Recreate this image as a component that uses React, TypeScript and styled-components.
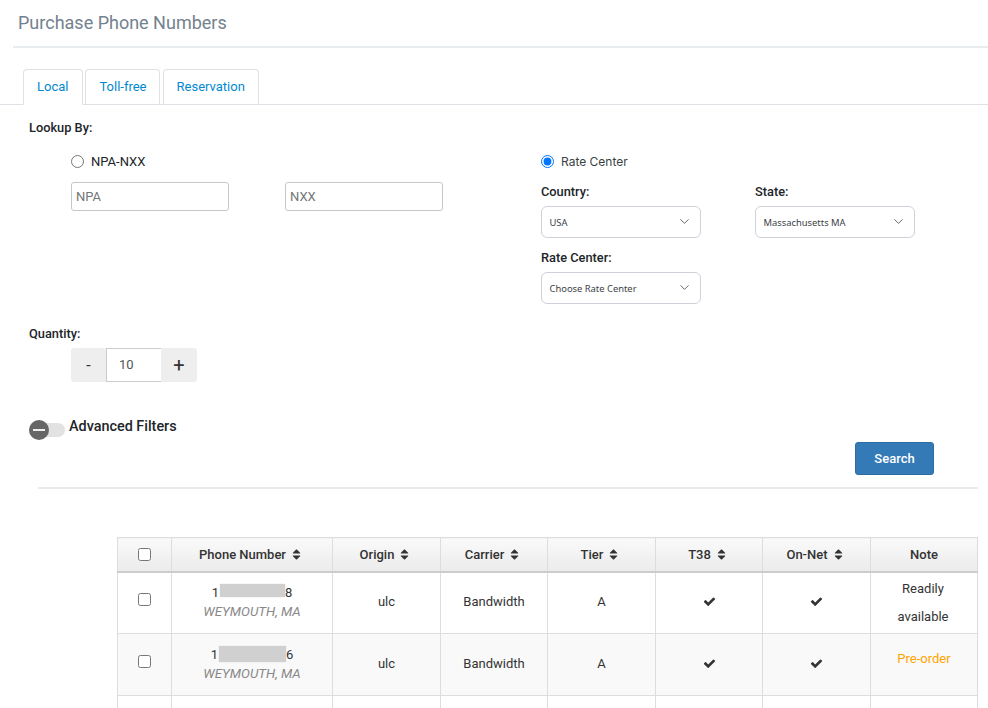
import { FC } from "react"
import styled, { createGlobalStyle } from "styled-components"
import { ChevronDown } from "lucide-react"

const GlobalStyle = createGlobalStyle`
  html, body {
    margin: 0;
    height: 708px;
    overflow: hidden;
    background: #fff;
    font-family: Roboto, "Liberation Sans", sans-serif;
    color: #333;
  }
  * {
    box-sizing: border-box;
  }
`

const tabs = ["Local", "Toll-free", "Reservation"]

const columns = [
  { label: "Phone Number", sortable: true, width: 161 },
  { label: "Origin", sortable: true, width: 108 },
  { label: "Carrier", sortable: true, width: 107 },
  { label: "Tier", sortable: true, width: 108 },
  { label: "T38", sortable: true, width: 107 },
  { label: "On-Net", sortable: true, width: 108 },
  { label: "Note", sortable: false, width: 107 },
]

const rows = [
  { first: "1", last: "8", blur: 65, preorder: false },
  { first: "1", last: "6", blur: 67, preorder: true },
]

const SortIcon = () => (
  <svg width="13" height="13" viewBox="0 0 1792 1792" fill="currentColor">
    <path d="M1408 1088q0 26-19 45l-448 448q-19 19-45 19t-45-19l-448-448q-19-19-19-45t19-45 45-19h896q26 0 45 19t19 45zm0-384q0 26-19 45t-45 19h-896q-26 0-45-19t-19-45 19-45l448-448q19-19 45-19t45 19l448 448q19 19 19 45z" />
  </svg>
)

const CheckIcon = () => (
  <svg width="13" height="13" viewBox="0 0 1792 1792" fill="currentColor">
    <path d="M1671 566q0 40-28 68l-724 724-136 136q-28 28-68 28t-68-28l-136-136-362-362q-28-28-28-68t28-68l136-136q28-28 68-28t68 28l294 295 656-657q28-28 68-28t68 28l136 136q28 28 28 68z" />
  </svg>
)

const SelectField: FC<{ label?: string; value: string }> = ({ label, value }) => (
  <Field>
    {label && <FieldLabel>{label}</FieldLabel>}
    <SelectBox>
      <span>{value}</span>
      <ChevronDown size={15} strokeWidth={1.4} color="#555" />
    </SelectBox>
  </Field>
)

export default function App() {
  return (
    <Page>
      <GlobalStyle />
      <Header>
        <Title>Purchase Phone Numbers</Title>
      </Header>

      <TabBar>
        {tabs.map((tab, i) => (
          <Tab key={tab} $active={i === 0}>
            {tab}
          </Tab>
        ))}
      </TabBar>

      <Form>
        <SectionLabel>Lookup By:</SectionLabel>
        <Lookup>
          <LookupColumn>
            <RadioRow>
              <input type="radio" name="lookup" />
              NPA-NXX
            </RadioRow>
            <InputRow>
              <TextInput placeholder="NPA" />
              <TextInput placeholder="NXX" />
            </InputRow>
          </LookupColumn>
          <LookupColumn>
            <RadioRow>
              <input type="radio" name="lookup" defaultChecked />
              <RateLabel>Rate Center</RateLabel>
            </RadioRow>
            <SelectGrid>
              <SelectField label="Country:" value="USA" />
              <SelectField label="State:" value="Massachusetts MA" />
              <SelectField label="Rate Center:" value="Choose Rate Center" />
            </SelectGrid>
          </LookupColumn>
        </Lookup>

        <QuantityLabel>Quantity:</QuantityLabel>
        <Stepper>
          <StepButton>-</StepButton>
          <StepValue>10</StepValue>
          <StepButton $large>+</StepButton>
        </Stepper>

        <FilterRow>
          <Toggle>
            <Knob />
          </Toggle>
          <FilterLabel>Advanced Filters</FilterLabel>
        </FilterRow>

        <Actions>
          <SearchButton>Search</SearchButton>
        </Actions>
      </Form>

      <Divider />

      <Table>
        <colgroup>
          <col style={{ width: 54 }} />
          {columns.map((c) => (
            <col key={c.label} style={{ width: c.width }} />
          ))}
        </colgroup>
        <thead>
          <tr>
            <HeadCell>
              <input type="checkbox" />
            </HeadCell>
            {columns.map((c) => (
              <HeadCell key={c.label}>
                <HeadInner>
                  {c.label}
                  {c.sortable && <SortIcon />}
                </HeadInner>
              </HeadCell>
            ))}
          </tr>
        </thead>
        <tbody>
          {rows.map((row, i) => (
            <Row key={i} $striped={i % 2 === 1}>
              <Cell>
                <RowCheck type="checkbox" />
              </Cell>
              <Cell>
                <PhoneLine>
                  {row.first}
                  <Redacted style={{ width: row.blur }} $tall={i === 1} />
                  {row.last}
                </PhoneLine>
                <Place>WEYMOUTH, MA</Place>
              </Cell>
              <Cell>ulc</Cell>
              <Cell>Bandwidth</Cell>
              <Cell>A</Cell>
              <Cell>
                <CheckIcon />
              </Cell>
              <Cell>
                <CheckIcon />
              </Cell>
              <Cell>
                {row.preorder ? (
                  <PreOrder>Pre-order</PreOrder>
                ) : (
                  <Note>Readily available</Note>
                )}
              </Cell>
            </Row>
          ))}
          <Row>
            {Array.from({ length: 8 }).map((_, i) => (
              <Cell key={i} />
            ))}
          </Row>
        </tbody>
      </Table>
    </Page>
  )
}

const Page = styled.div`
  width: 988px;
`

const Header = styled.header`
  height: 48px;
  margin-left: 13px;
  padding: 12px 0 0 5px;
  border-bottom: 2px solid #e9ecef;
`

const Title = styled.h1`
  margin: 0;
  font-size: 18px;
  line-height: 22px;
  font-weight: 400;
  color: #74818f;
`

const TabBar = styled.nav`
  display: flex;
  gap: 2px;
  height: 36px;
  margin-top: 21px;
  padding-left: 23px;
  border-bottom: 1px solid #dee2e6;
`

const Tab = styled.a<{ $active?: boolean }>`
  height: ${(p) => (p.$active ? "36px" : "35px")};
  padding: 0 ${(p) => (p.$active ? "14px" : "13px")} 0 13px;
  margin-right: ${(p) => (p.$active ? "0" : "1px")};
  border: 1px solid #dee2e6;
  border-bottom: ${(p) => (p.$active ? "1px solid #fff" : "none")};
  border-radius: 4px 4px 0 0;
  background: #fff;
  color: #0288d1;
  font-size: 13px;
  line-height: 34px;

  &:nth-child(2) {
    padding-right: 12px;
  }
`

const Form = styled.div`
  padding-left: 29px;
`

const SectionLabel = styled.div`
  margin-top: 15px;
  font-size: 12.8px;
  line-height: 16px;
  font-weight: 500;
  color: #212529;
`

const Lookup = styled.div`
  display: grid;
  grid-template-columns: 470px 1fr;
  margin-top: 15px;
  padding-left: 42px;
`

const LookupColumn = styled.div`
  display: flex;
  flex-direction: column;
`

const RadioRow = styled.label`
  display: flex;
  align-items: center;
  gap: 7px;
  height: 20px;
  font-size: 13px;
  color: #212529;

  input {
    width: 13px;
    height: 13px;
    margin: 0;
  }
`

const RateLabel = styled.span`
  font-family: Inter, Roboto, sans-serif;
  font-size: 12px;
  color: #3a3f44;
`

const InputRow = styled.div`
  display: flex;
  gap: 56px;
  margin-top: 11px;
`

const TextInput = styled.input`
  width: 158px;
  height: 29px;
  padding: 0 4px;
  border: 1px solid #c4c8cc;
  border-radius: 3px;
  font-family: Roboto, sans-serif;
  font-size: 13px;
  &::placeholder {
    color: #757575;
    opacity: 1;
  }
`

const SelectGrid = styled.div`
  display: grid;
  grid-template-columns: 214px 160px;
  row-gap: 12px;
  margin-top: 13px;
`

const Field = styled.div`
  display: flex;
  flex-direction: column;
  gap: 6px;
`

const FieldLabel = styled.div`
  font-size: 12.8px;
  line-height: 16px;
  font-weight: 500;
  color: #212529;
`

const SelectBox = styled.div`
  display: flex;
  align-items: center;
  justify-content: space-between;
  width: 160px;
  height: 32px;
  padding: 0 8px 0 7.5px;
  border: 1px solid #ced1d8;
  border-radius: 6px;
  font-family: "Noto Sans", sans-serif;
  font-size: 9.4px;
  color: #3c4248;

  svg {
    margin-top: -2px;
  }
`

const QuantityLabel = styled(SectionLabel)`
  margin-top: 22px;
`

const Stepper = styled.div`
  display: flex;
  width: 126px;
  height: 34px;
  margin: 6px 0 0 42px;
  border-radius: 3px;
  overflow: hidden;
  background: #eee;
`

const StepButton = styled.div<{ $large?: boolean }>`
  display: flex;
  flex: ${(p) => (p.$large ? "1" : "0 0 35px")};
  align-items: center;
  justify-content: center;
  font-size: ${(p) => (p.$large ? "20px" : "16px")};
  color: #333;
`

const StepValue = styled.div`
  width: 55px;
  padding-left: 12px;
  border: 1px solid #ccc;
  border-right: none;
  background: #fff;
  font-size: 13px;
  line-height: 32px;
  color: #555;
`

const FilterRow = styled.div`
  display: flex;
  align-items: flex-start;
  gap: 4px;
  margin-top: 36px;
`

const Toggle = styled.div`
  position: relative;
  width: 36px;
  height: 14px;
  margin-top: 5px;
  border-radius: 7px;
  background: #e2e2e2;
`

const Knob = styled.div`
  position: absolute;
  top: -3px;
  left: 0;
  width: 20px;
  height: 20px;
  border-radius: 50%;
  background: #666;

  &::after {
    content: "";
    position: absolute;
    top: 9px;
    left: 4px;
    width: 12px;
    height: 2px;
    background: #eee;
  }
`

const FilterLabel = styled.div`
  font-size: 14.4px;
  line-height: 18px;
  font-weight: 500;
  color: #212529;
`

const Actions = styled.div`
  display: flex;
  justify-content: flex-end;
  padding-right: 54px;
  margin-top: 5px;
`

const SearchButton = styled.button`
  width: 79px;
  height: 33px;
  border: 1px solid #2e6da4;
  border-radius: 3px;
  background: #337ab7;
  color: #fff;
  font-family: Roboto, sans-serif;
  font-size: 13px;
  font-weight: 500;
`

const Divider = styled.hr`
  height: 2px;
  margin: 12px 10px 0 38px;
  border: none;
  background: #e9ecef;
`

const Table = styled.table`
  width: 860px;
  margin: 48px 0 0 117px;
  border-collapse: collapse;
  table-layout: fixed;
  font-size: 13px;
  color: #333;

  input {
    display: block;
    width: 13px;
    height: 13px;
    margin: 0 auto;
  }
`

const HeadCell = styled.th`
  height: 34px;
  padding: 0;
  border: 1px solid #ddd;
  border-bottom: 2px solid #ccc;
  background: linear-gradient(#fafafa, #ebebeb);
  font-weight: 500;
  text-align: center;
`

const HeadInner = styled.span`
  display: inline-flex;
  align-items: center;
  gap: 4px;

  svg {
    margin-right: 2px;
  }
`

const Row = styled.tr<{ $striped?: boolean }>`
  height: 62px;
  background: ${(p) => (p.$striped ? "#f9f9f9" : "#fff")};
`

const Cell = styled.td`
  padding: 0 0 2px;
  border: 1px solid #ddd;
  text-align: center;
  vertical-align: middle;

  svg {
    display: block;
    margin: 0 auto;
  }
`

const RowCheck = styled.input`
  && {
    margin: -5px auto 0;
  }
`

const PhoneLine = styled.div`
  display: flex;
  align-items: center;
  justify-content: center;
  height: 19px;
  line-height: 19px;
`

const Redacted = styled.span<{ $tall?: boolean }>`
  height: ${(p) => (p.$tall ? "16px" : "13px")};
  margin: ${(p) => (p.$tall ? "0" : "-3px")} 0 0 1px;
  background: #d0d0d0;
  box-shadow: 0 0 1px #d0d0d0;
`

const Place = styled.div`
  font-size: 13.3px;
  font-style: italic;
  line-height: 19px;
  color: #888;
`

const Note = styled.div`
  margin-top: 2px;
  padding: 0 21px 0 19px;
  line-height: 28px;
`

const PreOrder = styled.div`
  margin-top: -10px;
  color: #ffa500;
`
